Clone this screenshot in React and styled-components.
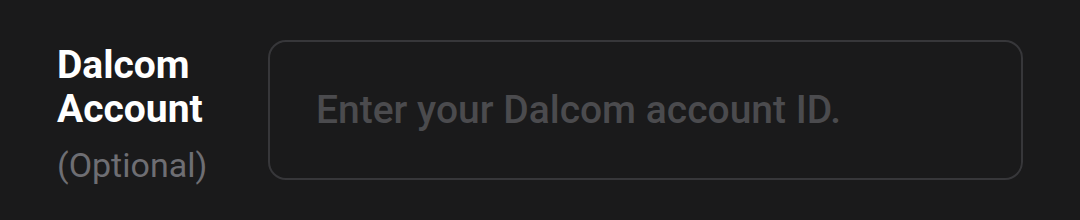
import React from 'react';
import styled, { createGlobalStyle } from 'styled-components';

const GlobalStyle = createGlobalStyle`
    html, body {
        margin: 0;
        background: #1a1a1b;
    }
    body {
        font-family: Roboto, "Noto Sans", sans-serif;
    }
`;

const FieldRow = styled.div`
    display: flex;
    align-items: center;
    height: 220px;
    padding: 0 57px;
    box-sizing: border-box;
    background: #1a1a1b;
`;

const LabelBlock = styled.label`
    width: 211px;
    flex-shrink: 0;
    display: flex;
    flex-direction: column;
    padding-top: 10px;
`;

const LabelTitle = styled.span`
    color: #ffffff;
    font-size: 39px;
    font-weight: 700;
    line-height: 44px;
`;

const LabelHint = styled.span`
    color: #6e6e73;
    font-size: 34px;
    font-weight: 400;
    line-height: 44px;
    margin-top: 12px;
`;

const TextInput = styled.input`
    flex: 1;
    height: 140px;
    box-sizing: border-box;
    border: 2px solid #37373a;
    border-radius: 18px;
    background: #1a1a1b;
    padding: 0 46px;
    font-family: Roboto, "Noto Sans", sans-serif;
    font-size: 39px;
    font-weight: 500;
    color: #ffffff;
    outline: none;

    &::placeholder {
        color: #4b4b4e;
    }
`;

function App() {
    return (
        <>
            <GlobalStyle />
            <FieldRow>
                <LabelBlock htmlFor="dalcom-id">
                    <LabelTitle>Dalcom<br />Account</LabelTitle>
                    <LabelHint>(Optional)</LabelHint>
                </LabelBlock>
                <TextInput id="dalcom-id" placeholder="Enter your Dalcom account ID." />
            </FieldRow>
        </>
    )
}

export default App
